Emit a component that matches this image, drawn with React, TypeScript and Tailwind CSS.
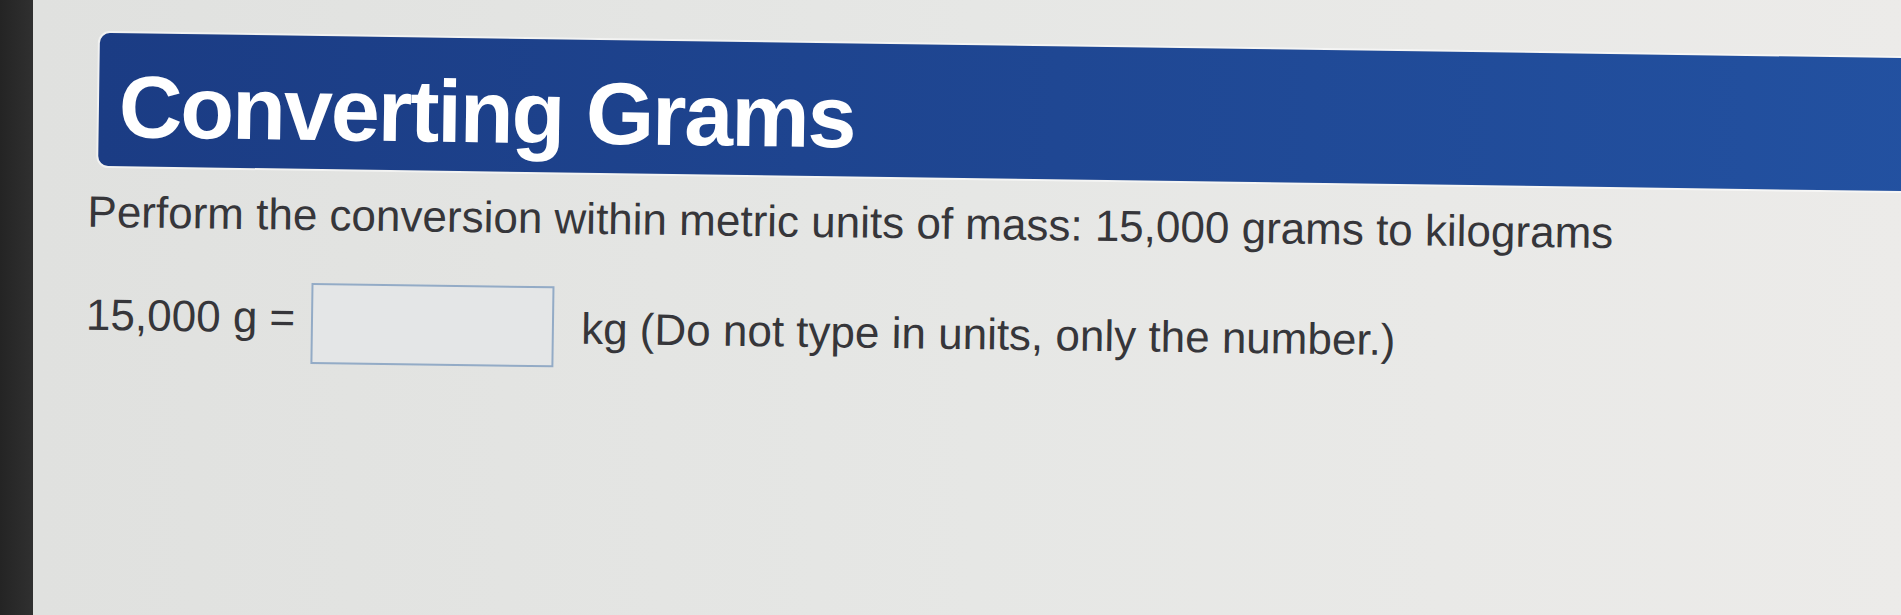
import { useState } from 'react';

const bodyFont = { fontFamily: '"Liberation Sans", Arial, Helvetica, sans-serif' };

function TitleBar({ title }: { title: string }) {
  return (
    <div className="ml-[67px] mt-[32px] flex h-[133px] w-[1900px] items-center rounded-l-[10px] bg-linear-to-r from-[#1b3c84] to-[#2352a2] pl-[20px] shadow-[0_0_0_2px_rgba(255,255,255,0.55)]">
      <h1 className="m-0 pt-[14px] text-[88px] font-bold leading-none tracking-[-2px] text-white">{title}</h1>
    </div>
  );
}

function AnswerRow() {
  const [value, setValue] = useState('');
  return (
    <div className="mt-[46px] flex items-start">
      <span className="mt-[13px] leading-none">15,000 g =</span>
      <input
        className="ml-[16px] h-[81px] w-[243px] border-2 border-[#93abc6] bg-[#e4e6e7] px-3 text-[40px] text-[#333336] outline-none"
        value={value}
        onChange={(e) => setValue(e.target.value)}
        aria-label="kilograms"
      />
      <span className="ml-[27px] mt-[20px] leading-none">kg (Do not type in units, only the number.)</span>
    </div>
  );
}

export default function App() {
  return (
    <div className="flex h-[615px] w-full overflow-hidden" style={bodyFont}>
      <div className="w-[33px] shrink-0 bg-linear-to-r from-[#242424] to-[#303030]" />
      <main className="flex-1 overflow-hidden bg-linear-to-r from-[#e0e1df] via-[#e6e7e5] to-[#ecebe9]">
        <div className="origin-top-left rotate-[0.8deg]">
          <TitleBar title="Converting Grams" />
          <div className="ml-[57px] text-[44px] text-[#36363a]">
            <p className="m-0 mt-[24px] leading-none">
              Perform the conversion within metric units of mass: 15,000 grams to kilograms
            </p>
            <AnswerRow />
          </div>
        </div>
      </main>
    </div>
  );
}
